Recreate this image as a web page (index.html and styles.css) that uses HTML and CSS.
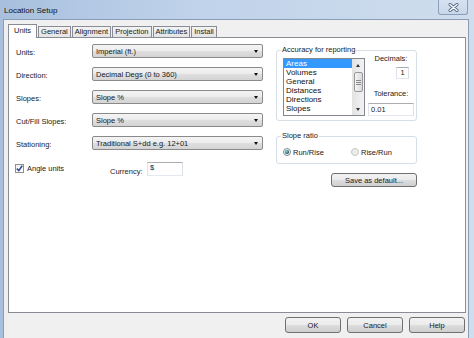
FILE: index.html
```html
<!DOCTYPE html>
<html>
<head>
<meta charset="utf-8">
<link rel="stylesheet" href="styles.css">
</head>
<body>
<div class="window">
  <div class="titlebar">
    <span class="title">Location Setup</span>
    <div class="close">
      <svg width="11" height="9" viewBox="0 0 11 9">
        <path d="M2 1.5 L9 7.5 M9 1.5 L2 7.5" stroke="#53657d" stroke-width="3" stroke-linecap="round"/>
        <path d="M2 1.5 L9 7.5 M9 1.5 L2 7.5" stroke="#ffffff" stroke-width="1.4" stroke-linecap="round"/>
      </svg>
    </div>
  </div>
  <div class="client">
    <div class="tabs">
      <div class="tab active">Units</div>
      <div class="tab">General</div>
      <div class="tab">Alignment</div>
      <div class="tab">Projection</div>
      <div class="tab">Attributes</div>
      <div class="tab">Install</div>
    </div>
    <div class="panel">
      <div class="col-left">
        <div class="field-label">Units:</div>
        <div class="combo"><span>Imperial (ft.)</span><span class="arrow"></span></div>
        <div class="field-label">Direction:</div>
        <div class="combo"><span>Decimal Degs (0 to 360)</span><span class="arrow"></span></div>
        <div class="field-label">Slopes:</div>
        <div class="combo"><span>Slope %</span><span class="arrow"></span></div>
        <div class="field-label">Cut/Fill Slopes:</div>
        <div class="combo"><span>Slope %</span><span class="arrow"></span></div>
        <div class="field-label">Stationing:</div>
        <div class="combo"><span>Traditional S+dd e.g. 12+01</span><span class="arrow"></span></div>
        <div class="check-row">
          <label class="check">
            <span class="box">
              <svg width="9" height="9" viewBox="0 0 9 9"><path d="M1.8 4.6 L3.8 6.6 L7.2 1.8" fill="none" stroke="#2a4a8f" stroke-width="1.5"/></svg>
            </span>
            Angle units
          </label>
          <span class="currency-label">Currency:</span>
          <span class="textbox currency">$</span>
        </div>
      </div>
      <div class="col-right">
        <fieldset class="group accuracy">
          <legend>Accuracy for reporting</legend>
          <div class="acc-body">
            <div class="listbox">
              <div class="items">
                <div class="item selected">Areas</div>
                <div class="item">Volumes</div>
                <div class="item">General</div>
                <div class="item">Distances</div>
                <div class="item">Directions</div>
                <div class="item">Slopes</div>
                <div class="item">Cut/Fill Slopes</div>
              </div>
              <div class="scrollbar">
                <div class="sb-btn"><span class="tri-up"></span></div>
                <div class="sb-track">
                  <div class="thumb"><span class="grip"></span><span class="grip"></span><span class="grip"></span></div>
                </div>
                <div class="sb-btn"><span class="tri-down"></span></div>
              </div>
            </div>
            <div class="acc-side">
              <div class="side-label">Decimals:</div>
              <div class="textbox dec">1</div>
              <div class="side-label tol-label">Tolerance:</div>
              <div class="textbox tol">0.01</div>
            </div>
          </div>
        </fieldset>
        <fieldset class="group slope">
          <legend>Slope ratio</legend>
          <div class="radios">
            <label class="radio first">
              <svg width="8" height="8" viewBox="0 0 8 8">
                <defs><radialGradient id="dot" cx="0.4" cy="0.4" r="0.6"><stop offset="0" stop-color="#7fe0d8"/><stop offset="1" stop-color="#12465a"/></radialGradient></defs>
                <circle cx="4" cy="4" r="3.5" fill="#f4f4f4" stroke="#7f8a96"/>
                <circle cx="4" cy="4" r="2.1" fill="url(#dot)"/>
              </svg>
              Run/Rise
            </label>
            <label class="radio">
              <svg width="8" height="8" viewBox="0 0 8 8">
                <circle cx="4" cy="4" r="3.5" fill="#ececec" stroke="#c6c6c6"/>
              </svg>
              Rise/Run
            </label>
          </div>
        </fieldset>
        <div class="btn save">Save as default...</div>
      </div>
    </div>
    <div class="footer">
      <div class="btn foot">OK</div>
      <div class="btn foot">Cancel</div>
      <div class="btn foot">Help</div>
    </div>
  </div>
</div>
</body>
</html>
```
FILE: styles.css
```css
* { box-sizing: border-box; }
html, body { margin: 0; padding: 0; }
body {
  font-family: "Liberation Sans", Arial, sans-serif;
  font-size: 7.5px;
  color: #1a1a1a;
  width: 474px;
  height: 338px;
  overflow: hidden;
}
.window {
  width: 474px;
  height: 338px;
  background: linear-gradient(to right, #a8c0de 0%, #bfd2ea 40%, #c9d9ec 75%, #cfdded 100%);
  display: flex;
  flex-direction: column;
}
.titlebar {
  height: 19px;
  display: flex;
  align-items: flex-start;
  padding-left: 4px;
  flex: none;
}
.title {
  font-size: 8px;
  line-height: 10px;
  padding-top: 6px;
  color: #111;
}
.close {
  margin-left: auto;
  margin-right: 6px;
  width: 30px;
  height: 15px;
  border: 1px solid #8d9fb8;
  border-top: none;
  border-radius: 0 0 3px 3px;
  background: linear-gradient(#d6e2f0, #c8d7ea);
  display: flex;
  align-items: center;
  justify-content: center;
}
.client {
  flex: 1;
  margin: 0 5px 0 3px;
  border: 1px solid #8b9db6;
  border-bottom: none;
  background: #f0f0f0;
  padding: 4px 2px 0 4px;
  display: flex;
  flex-direction: column;
}
.tabs {
  display: flex;
  align-items: flex-end;
  height: 13px;
  gap: 1px;
  flex: none;
}
.tab {
  height: 11px;
  line-height: 10px;
  padding: 0 2px;
  border: 1px solid #898c95;
  border-bottom: none;
  background: linear-gradient(#f3f3f3, #e4e4e4);
  white-space: nowrap;
}
.tab.active {
  height: 14px;
  line-height: 12px;
  margin-bottom: -1px;
  padding: 0 5px;
  background: #fff;
  position: relative;
  z-index: 1;
}
.panel {
  height: 276px;
  width: 458px;
  border: 1px solid #898c95;
  background: #fff;
  display: flex;
  gap: 13px;
  padding: 6px 0 0 7px;
  flex: none;
}
.col-left {
  width: 247px;
  display: grid;
  grid-template-columns: 76px 171px;
  grid-auto-rows: 14px;
  row-gap: 9px;
  align-content: start;
}
.field-label {
  line-height: 10px;
  padding-top: 4px;
  white-space: nowrap;
}
.combo {
  height: 14px;
  border: 1px solid #8a8a8a;
  border-radius: 2px;
  background: linear-gradient(#f4f4f4 0%, #ececec 48%, #dfdfdf 52%, #d4d4d4 100%);
  display: flex;
  align-items: center;
  padding: 0 4px 0 3px;
  white-space: nowrap;
}
.combo .arrow {
  margin-left: auto;
  width: 0;
  height: 0;
  border-left: 2.5px solid transparent;
  border-right: 2.5px solid transparent;
  border-top: 3px solid #111;
}
.check-row {
  grid-column: 1 / -1;
  margin-top: 3px;
  display: flex;
  align-items: flex-start;
  height: 14px;
}
.check {
  width: 95px;
  margin-left: -1px;
  display: flex;
  align-items: center;
  gap: 3px;
  line-height: 14px;
}
.box {
  width: 9px;
  height: 9px;
  margin-top: -2px;
  border: 1px solid #8e8f8f;
  background: linear-gradient(#f1f1f1, #ffffff);
  display: flex;
  align-items: center;
  justify-content: center;
}
.box svg { display: block; margin: -1px; }
.currency-label {
  width: 37px;
  padding-top: 5px;
  line-height: 9px;
}
.textbox {
  background: #fff;
  border: 1px solid;
  border-color: #abadb3 #dbdfe6 #e3e9ef #e2e3ea;
}
.currency {
  width: 36px;
  height: 14px;
  padding: 1px 0 0 2px;
  line-height: 8px;
}
.col-right {
  width: 141px;
  display: flex;
  flex-direction: column;
}
.group {
  margin: 0;
  min-width: 0;
  border: 1px solid #d5dfe5;
  border-radius: 3px;
}
.group legend {
  font-size: 7.5px;
  line-height: 8px;
  padding: 0 1px;
  margin-left: -2px;
}
.accuracy {
  margin-top: 2px;
  padding: 0 1px 4px 6px;
}
.acc-body {
  display: flex;
  align-items: flex-start;
}
.listbox {
  margin-top: 4px;
  width: 82px;
  height: 58px;
  border: 1px solid #828790;
  display: flex;
  overflow: hidden;
}
.items {
  flex: 1;
  overflow: hidden;
  font-size: 8px;
}
.item {
  line-height: 9px;
  height: 9px;
  padding-left: 2px;
  white-space: nowrap;
  color: #111;
}
.item.selected {
  background: #3399ff;
  color: #fff;
}
.scrollbar {
  width: 12px;
  display: flex;
  flex-direction: column;
  background: linear-gradient(to right, #e3e3e3, #f2f2f2);
}
.sb-btn {
  height: 12px;
  display: flex;
  align-items: center;
  justify-content: center;
}
.tri-up, .tri-down {
  width: 0;
  height: 0;
  border-left: 2.5px solid transparent;
  border-right: 2.5px solid transparent;
}
.tri-up { border-bottom: 3px solid #333; }
.tri-down { border-top: 3px solid #333; }
.sb-track {
  flex: 1;
  display: flex;
  justify-content: center;
}
.thumb {
  margin-top: 1px;
  width: 9px;
  height: 20px;
  border: 1px solid #979797;
  border-radius: 2px;
  background: linear-gradient(to right, #f4f4f4, #dadada);
  display: flex;
  flex-direction: column;
  align-items: center;
  justify-content: center;
  gap: 1px;
}
.grip {
  width: 5px;
  height: 1px;
  background: #8a8a8a;
}
.acc-side {
  margin-left: 2px;
  width: 48px;
  display: flex;
  flex-direction: column;
  align-items: center;
}
.side-label {
  line-height: 9px;
  white-space: nowrap;
}
.dec {
  margin-top: 4px;
  width: 13px;
  height: 12px;
  align-self: flex-end;
  margin-right: 6px;
  text-align: center;
  line-height: 10px;
}
.tol-label { margin-top: 10px; }
.tol {
  margin-top: 5px;
  width: 46px;
  height: 13px;
  padding-left: 2px;
  line-height: 11px;
}
.slope {
  margin-top: 11px;
  padding: 6px 1px 5px 6px;
}
.radios {
  display: flex;
  height: 12px;
  align-items: center;
}
.radio {
  display: flex;
  align-items: center;
  gap: 2px;
}
.radio.first { width: 68px; }
.radio svg { display: block; }
.btn {
  border: 1px solid #707070;
  border-radius: 3px;
  background: linear-gradient(#f2f2f2 0%, #ebebeb 48%, #dddddd 52%, #cfcfcf 100%);
  display: flex;
  align-items: center;
  justify-content: center;
  white-space: nowrap;
}
.save {
  margin-top: 9px;
  align-self: flex-end;
  width: 86px;
  height: 14px;
}
.footer {
  margin-top: 4px;
  display: flex;
  justify-content: flex-end;
  gap: 6px;
  padding-right: 1px;
}
.foot {
  width: 56px;
  height: 16px;
}
```
